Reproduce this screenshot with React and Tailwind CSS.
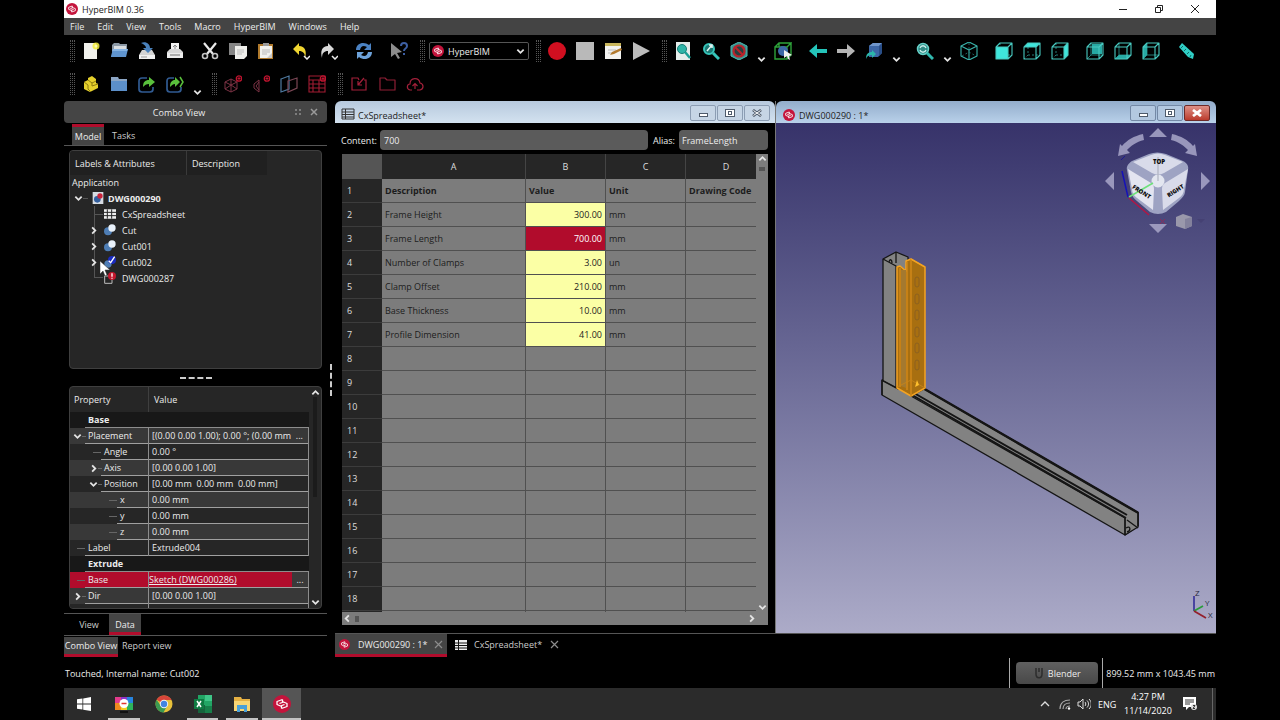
import React, { useState } from 'react';

const treeItems = [
  { label: 'CxSpreadsheet', icon: 'sheet' },
  { label: 'Cut', icon: 'cut', open: true },
  { label: 'Cut001', icon: 'cut', open: true },
  { label: 'Cut002', icon: 'cutCheck', open: true },
  { label: 'DWG000287', icon: 'link' },
];

const properties = [
  { group: 'Base' },
  { name: 'Placement', value: '[(0.00 0.00 1.00); 0.00 °; (0.00 mm  ...', level: 1, arrow: 'down', light: true },
  { name: 'Angle', value: '0.00 °', level: 2 },
  { name: 'Axis', value: '[0.00 0.00 1.00]', level: 2, arrow: 'right', light: true },
  { name: 'Position', value: '[0.00 mm  0.00 mm  0.00 mm]', level: 2, arrow: 'down' },
  { name: 'x', value: '0.00 mm', level: 3, light: true },
  { name: 'y', value: '0.00 mm', level: 3 },
  { name: 'z', value: '0.00 mm', level: 3, light: true },
  { name: 'Label', value: 'Extrude004', level: 1 },
  { group: 'Extrude' },
  { name: 'Base', value: 'Sketch (DWG000286)', level: 1, selected: true },
  { name: 'Dir', value: '[0.00 0.00 1.00]', level: 1, arrow: 'right', light: true },
  { name: '', value: '', level: 1 },
];

const sheetRows = [
  ['Description', 'Value', 'Unit', 'Drawing Code'],
  ['Frame Height', '300.00', 'mm', ''],
  ['Frame Length', '700.00', 'mm', ''],
  ['Number of Clamps', '3.00', 'un', ''],
  ['Clamp Offset', '210.00', 'mm', ''],
  ['Base Thickness', '10.00', 'mm', ''],
  ['Profile Dimension', '41.00', 'mm', ''],
];

function Svg({ children, size = 'size-[18px]' }) {
  return (
    <svg viewBox="0 0 18 18" className={`${size} shrink-0`} fill="none" aria-hidden="true">
      {children}
    </svg>
  );
}

function Logo({ size = 'size-3' }) {
  return (
    <Svg size={size}>
      <circle cx="9" cy="9" r="9" fill="#c4143c" />
      <path d="M9.500 4.500 4 6.500v3l3.500 1.500 4-1.500M8.500 13.500l5.500-2v-3L10.500 7 6.500 8.500M9.500 4.500v3M8.500 13.500v-3" stroke="#fff" strokeWidth="1.300" strokeLinejoin="round" />
    </Svg>
  );
}

function Chevron({ dir = 'down', className = '' }) {
  const paths = {
    down: 'M1.500 3 5 6.500 8.500 3',
    up: 'M1.500 7 5 3.500 8.500 7',
    right: 'M3.500 1.500 7 5 3.500 8.500',
    left: 'M6.500 1.500 3 5 6.500 8.500',
  };
  return (
    <svg viewBox="0 0 10 10" className={`size-[9px] shrink-0 ${className}`} fill="none" aria-hidden="true">
      <path d={paths[dir]} stroke="#e4e4e4" strokeWidth="2" />
    </svg>
  );
}

// Wireframe cube shared by all the standard view buttons
function Cube({ face }) {
  const faces = {
    front: 'M1 5h12v12H1z',
    top: 'M1 5l4-4h12l-4 4z',
    right: 'M13 5l4-4v12l-4 4z',
    rear: 'M6 2h10v10H6z',
    bottom: 'M1 17l4-4h12l-4 4z',
    left: 'M1 5l4-4v12l-4 4z',
  };
  const hidden = face === 'rear' || face === 'bottom' || face === 'left';
  return (
    <Svg>
      <path d="M5 1v12h12M5 13l-4 4" stroke="#2f9992" strokeWidth=".8" strokeDasharray={hidden ? '' : '2 2'} />
      <path d={faces[face]} fill={hidden ? '#27aaa4' : '#3fe6dc'} />
      <path d="M1 5h12v12H1zM1 5l4-4h12l-4 4M17 1v12l-4 4" stroke="#48c9c0" strokeWidth="1.100" strokeLinejoin="round" />
    </Svg>
  );
}

const icons = {
  new: <Svg><path d="M2 1h12l1 4v12H2z" fill="#f1f1ec" /><circle cx="14" cy="4" r="3.500" fill="#f4ee3a" opacity=".85" /><circle cx="14" cy="4" r="1.500" fill="#fffbb0" /></Svg>,
  open: <Svg><path d="M2 3l2-2h5l1 1h7v8H2z" fill="#8b98a5" /><path d="M4 4h12v5H4z" fill="#d9dde0" /><path d="M1 14 3 7h15l-2 8H1z" fill="#5f94cf" /><path d="M3 7h15l-1 2H2z" fill="#85b3e3" /></Svg>,
  save: <Svg><path d="M4 8h10l3 5v4H1v-4z" fill="#d3d3d3" /><path d="M1 13h16v4H1z" fill="#f0f0f0" /><path d="M3 1c5-2 9 1 9 5h3l-5 5-5-5h3c0-2-2-4-5-5z" fill="#4a82bd" /><path d="M3 15h6" stroke="#999" /></Svg>,
  print: <Svg><path d="M5 1h8v8H5z" fill="#f5f5f5" /><path d="M9 8V3M7 5l2-2 2 2" stroke="#888" /><path d="M1 10l3-3h10l3 3v5H1z" fill="#d8d8d8" /><path d="M1 11h16v5H1z" fill="#ececec" /><path d="M4 13h10" stroke="#999" strokeWidth="1.500" /></Svg>,
  cut: <Svg><path d="M3 1l9 11M15 1 6 12" stroke="#e9e9e9" strokeWidth="2.200" /><circle cx="4" cy="14" r="2.500" stroke="#c4c4c4" strokeWidth="1.600" /><circle cx="14" cy="14" r="2.500" stroke="#c4c4c4" strokeWidth="1.600" /></Svg>,
  copy: <Svg><path d="M0 1h12v12H0z" fill="#858585" /><path d="M6 4h12v10l-3 3H6z" fill="#efefec" /><path d="M8 8h7M8 10h7M8 12h5" stroke="#bdbdbd" /></Svg>,
  paste: <Svg><path d="M1 2h15v15H1z" fill="#b07a2c" /><path d="M3 4h12v12H3z" fill="#f2f2ee" /><path d="M6 1h6v3H6z" fill="#9a9a9a" /><path d="M5 8h8M5 10h8M5 12h5" stroke="#bbb" /><path d="M10 16l5-5v5z" fill="#c9c9c9" /></Svg>,
  undo: <Svg><path d="M1 7 7 1v3c6 0 8 5 6 12 0-5-2-7-6-7v4z" fill="#f0d531" /><Wee /></Svg>,
  redo: <Svg><path d="M14 7 8 1v3C2 4 0 9 2 16c0-5 2-7 6-7v4z" fill="#d9d9d9" /><Wee /></Svg>,
  refresh: <Svg><path d="M1 8C1 1 9-1 14 3l2-2v7H9l3-3C8 3 6 4 5 8z" fill="#4b82c2" /><path d="M17 10c0 7-8 9-13 5l-2 2v-7h7l-3 3c4 2 6 1 7-3z" fill="#6da2da" /></Svg>,
  whats: <Svg><path d="M1 1l11 9-5 1 3 5-2 1-3-5-4 3z" fill="#8d8d8d" /><path d="M11 4c0-4 6-4 6 0 0 3-3 2-3 5M14 11v2" stroke="#3d5fa3" strokeWidth="2" /></Svg>,
  record: <Svg><circle cx="9" cy="9" r="9" fill="#d10f20" /></Svg>,
  stop: <Svg><path d="M0 0h18v18H0z" fill="#b9b9b9" /></Svg>,
  macro: <Svg><path d="M1 1h16v16H1z" fill="#f3f3f0" /><path d="M1 1h16v3H1z" fill="#c9b65c" /><path d="M4 8h8M4 11h5" stroke="#bbb" /><path d="M17 6 8 10l-2 3 4-1 8-4z" fill="#b37a2d" /></Svg>,
  play: <Svg><path d="M1 0l17 9-17 9z" fill="#bcbcbc" /></Svg>,
  fitAll: <Svg><path d="M2 0h14v18H2z" fill="#e4ecea" /><circle cx="8" cy="7" r="4.500" fill="#2fb5a8" stroke="#157d76" /><path d="M11 10l5 6" stroke="#1a9f95" strokeWidth="2.500" /></Svg>,
  fitSel: <Svg><circle cx="7" cy="7" r="5" fill="#1a7772" stroke="#36c4b9" strokeWidth="2" /><path d="M11 11l6 6" stroke="#36c4b9" strokeWidth="3" /><path d="M5 9l5-6M7 3h3v3" stroke="#e2f4f2" strokeWidth="1.500" /></Svg>,
  drawStyle: <Svg><path d="M9 0l8 4v10l-8 4-8-4V4z" fill="#3b8f8b" stroke="#4fb9b3" /><circle cx="9" cy="9" r="5.500" fill="#26403f" stroke="#b9232b" strokeWidth="2.200" /><path d="M5 5l8 8" stroke="#b9232b" strokeWidth="2.200" /></Svg>,
  bbox: <Svg><path d="M1 5h12v12H1zM1 5l4-4h12l-4 4M17 1v12l-4 4M5 1v4" stroke="#2ea23a" strokeWidth="1.400" /><circle cx="9" cy="9" r="5" fill="#3c67a6" /><path d="M10 8l8 5-3 1 1 4-2-1-1-3-3 2z" fill="#f2f2f2" /></Svg>,
  back: <Svg><path d="M0 9l8-7v5h10v4H8v5z" fill="#25c4ba" /></Svg>,
  forward: <Svg><path d="M18 9l-8-7v5H0v4h10v5z" fill="#b5b5b5" /></Svg>,
  linkGo: <Svg><path d="M4 4l4-3h9v10l-4 4H4z" fill="#3c66a6" /><path d="M4 4l4-3h9l-3 3z" fill="#7096cb" /><path d="M14 4l3-3v10l-3 3z" fill="#294e88" /><path d="M1 17c0-5 2-7 6-7V8l4 4-4 4v-3c-3 0-5 1-6 4z" fill="#2cb6ab" /></Svg>,
  zoom: <Svg><circle cx="7" cy="7" r="5.500" fill="#2f8a84" stroke="#66cfc7" strokeWidth="1.500" /><path d="M11 11l6 6" stroke="#31b8ae" strokeWidth="3" /><path d="M4 6c1-3 5-3 6 0M10 8c-1 3-5 3-6 0" stroke="#c9efec" strokeWidth="1.300" /></Svg>,
  iso: <Svg><path d="M9 0l8 4v10l-8 4-8-4V4zM1 4l8 4 8-4M9 8v10" stroke="#3bb5ad" strokeWidth="1.100" strokeLinejoin="round" /><path d="M9 1v8M2 14l7-4 7 4" stroke="#2a827c" strokeWidth=".8" strokeDasharray="2 2" /></Svg>,
  front: <Cube face="front" />,
  top: <Cube face="top" />,
  right: <Cube face="right" />,
  rear: <Cube face="rear" />,
  bottom: <Cube face="bottom" />,
  left: <Cube face="left" />,
  measure: <Svg><path d="M5 1l12 11-1 5-5-2L2 5z" fill="#30cfc6" /><path d="M4 6l2-2M7 9l2-2M10 12l2-2M13 15l1-2" stroke="#116a66" /></Svg>,
  part: <Svg><path d="M2 7l4-2V3l4-2 4 3v4l2 1v4l-8 4-6-3z" fill="#e4cf2c" /><path d="M2 7l4 3v4l3 3M6 5l4 3 4-2M10 8v3l6-2" stroke="#8c7a10" /></Svg>,
  folder: <Svg><path d="M1 2h7l1 2h8v12H1z" fill="#8ba5c4" /><path d="M1 6h16v10H1z" fill="#5c8fc9" /></Svg>,
  export: <Svg><path d="M9 3H4c-2 0-3 1-3 3v8c0 2 1 3 3 3h8c2 0 3-1 3-3v-2" stroke="#315b92" strokeWidth="1.700" /><path d="M5 12c0-5 2-7 6-7V2l6 5-6 5V9c-3 0-4 1-6 3z" fill="#5ac03c" /></Svg>,
  exportAll: <Svg><path d="M8 3H4C2 3 1 4 1 6v8c0 2 1 3 3 3h8c2 0 3-1 3-3v-2" stroke="#315b92" strokeWidth="1.700" /><path d="M4 12c0-5 2-7 5-7V2l5 5-5 5V9c-2 0-3 1-5 3z" fill="#5ac03c" /><path d="M14 2l3 5-3 5" stroke="#5ac03c" strokeWidth="1.500" /></Svg>,
  hex: <Svg><path d="M7 4l6 3v7l-6 3-6-3V7zM1 7l6 3 6-3M7 4v13M1 14l6-4 6 4" stroke="#7d3345" /><Plus /></Svg>,
  panel: <Svg><path d="M2 9l5-4v12l-5-4zM7 7l-3 4 3 4" stroke="#7d3345" /><Plus /></Svg>,
  planes: <Svg><path d="M1 4l8-3v13l-8 3z" stroke="#4f7aa0" strokeWidth="1.200" /><path d="M8 6l9-3v10l-9 4z" stroke="#7a4654" strokeWidth="1.200" /></Svg>,
  grid: <Svg><path d="M1 1h16v16H1zM1 5h16M1 9h16M1 13h16M5 5v12M11 5v12" stroke="#a31c33" strokeWidth="1.100" /><Plus /></Svg>,
  folderIn: <Svg><path d="M9 5 8 3H2v12h14V5h-2M14 3l-6 7M8 6v4h4" stroke="#a3203a" strokeWidth="1.200" /></Svg>,
  folderRed: <Svg><path d="M2 3h5l2 2h8v10H2z" stroke="#8f1f35" strokeWidth="1.200" strokeLinejoin="round" /></Svg>,
  cloud: <Svg><path d="M6 15H4c-4-1-3-6 0-6 0-7 9-7 10-1 4 1 4 6 0 7h-3M9 14V9M6.500 11 9 8.500 11.500 11" stroke="#a3203a" strokeWidth="1.200" /></Svg>,
  sheet: <Svg size="size-3"><path d="M0 2h18v14H0z" fill="#f0f0f0" /><path d="M0 6.500h18M0 11.500h18M5 2v14M11.500 2v14" stroke="#262626" strokeWidth="1.500" /></Svg>,
  cutItem: <Svg size="size-3"><circle cx="6" cy="11" r="6" fill="#4e7db4" /><circle cx="12" cy="6" r="5.500" fill="#e9f1fa" /></Svg>,
  cutCheck: <Svg size="size-3"><circle cx="6" cy="12" r="5.500" fill="#4e7db4" /><circle cx="12" cy="6" r="6" fill="#1a2bc0" /><path d="M7 7l3 3 6-9" stroke="#fff" strokeWidth="2" /></Svg>,
  link: <Svg size="size-3"><path d="M1 6h11v11H1z" stroke="#bbb" strokeWidth="1.500" /><circle cx="12" cy="6" r="6" fill="#c3162c" /><path d="M12 2v5M12 8.500V10" stroke="#fff" strokeWidth="2" /></Svg>,
  doc: <Svg size="size-3"><path d="M1 0h16v18H1z" fill="#d6dbe2" /><circle cx="8" cy="11" r="5" fill="#335f9e" /><circle cx="12" cy="6" r="4" fill="#c8233a" /></Svg>,
};

function Wee() {
  return <path d="M12 14l3 3 3-3" stroke="#eee" strokeWidth="1.500" />;
}

function Plus() {
  return (
    <>
      <circle cx="15" cy="3.500" r="2.700" stroke="#c0142f" strokeWidth="1.300" />
      <path d="M13.500 3.500h3M15 2v3" stroke="#c0142f" />
    </>
  );
}

function Tool({ name }) {
  return (
    <button aria-label={name} className="flex h-7 w-7 shrink-0 items-center justify-center">
      {icons[name]}
    </button>
  );
}

function Tools({ names }) {
  return names.map((n) => <Tool key={n} name={n} />);
}

function Sep() {
  return <span className="w-[7px] shrink-0" />;
}

function More() {
  return (
    <button aria-label="More" className="flex h-7 w-4 shrink-0 items-end justify-center pb-px">
      <Chevron />
    </button>
  );
}

function Handle({ className = 'ml-[5px]' }) {
  return (
    <span className={`flex h-[22px] w-[9px] shrink-0 gap-px pl-[2px] ${className}`}>
      <span className="border-l border-dotted border-[#555]" />
      <span className="border-l border-dotted border-[#555]" />
      <span className="border-l border-dotted border-[#555]" />
    </span>
  );
}

function WinButtons({ active }) {
  const base = 'flex h-4 w-[26px] items-center justify-center rounded-xs border';
  const plain = active ? 'border-[#7489a6] bg-[#b3c8e0]' : 'border-[#8c9db3] bg-[#c6d5e5]';
  return (
    <div className="ml-auto flex gap-px pt-px">
      <button aria-label="Minimize" className={`${base} ${plain}`}>
        <span className="mt-1 h-[4px] w-[9px] border border-[#4f5b6b] bg-white" />
      </button>
      <button aria-label="Maximize" className={`${base} ${plain}`}>
        <span className="flex h-[8px] w-[10px] items-center justify-center border border-[#4f5b6b] bg-white">
          <span className="h-[4px] w-[4px] border border-[#4f5b6b]" />
        </span>
      </button>
      <button aria-label="Close" className={`${base} ${active ? 'border-[#6d2a28] bg-linear-to-b from-[#dd8f86] to-[#bb3a2c]' : plain}`}>
        <svg viewBox="0 0 10 8" className="h-2 w-2.5" aria-hidden="true">
          <path d="M1 1l8 6M9 1 1 7" stroke={active ? '#fff' : '#4f5b6b'} strokeWidth="2.800" />
          {!active && <path d="M1.500 1.500l7 5M8.500 1.500l-7 5" stroke="#fff" strokeWidth="1" />}
        </svg>
      </button>
    </div>
  );
}

function TreeView() {
  return (
    <div className="relative mx-[5px] flex-1 overflow-hidden rounded-sm border border-[#3f3f3f] bg-[#262626]">
      <div className="flex h-6 items-center">
        <span className="flex h-full w-[117px] items-center border-r border-[#3a3a3a] bg-[#202020] pl-[5px]">Labels &amp; Attributes</span>
        <span className="flex h-full w-20 items-center bg-[#202020] pl-[5px]">Description</span>
      </div>
      <div className="h-[15px] pl-[2px]">Application</div>
      <div className="flex h-4 items-center">
        <Chevron className="ml-1" />
        <span className="mr-1 w-[5px] border-t border-[#555]" />
        {icons.doc}
        <span className="ml-1 font-bold">DWG000290</span>
      </div>
      <ul className="ml-6">
        {treeItems.map((item, i) => (
          <li key={item.label} className="flex h-4 items-center">
            <span className={`w-[9px] border-l border-[#555] ${i === treeItems.length - 1 ? 'h-2 self-start border-b' : 'flex h-4 items-center'}`}>
              {item.open ? <Chevron dir="right" className="-ml-1.5" /> : i === 0 && <span className="w-2 border-t border-[#555]" />}
            </span>
            <span className="ml-px flex w-3.5">{item.icon === 'cut' ? icons.cutItem : icons[item.icon]}</span>
            <span className="ml-1">{item.label}</span>
          </li>
        ))}
      </ul>
      <svg viewBox="0 0 10 16" className="absolute top-[110px] left-[30px] h-4 w-2.5" aria-hidden="true">
        <path d="M0 0v13l3-3 2 5 2-1-2-5h5z" fill="#fff" stroke="#333" strokeWidth=".5" />
      </svg>
    </div>
  );
}

const nameIndent = { 1: 'ml-[15px]', 2: 'ml-[31px]', 3: 'ml-[47px]' };
const arrowIndent = { 1: 'left-[3px]', 2: 'left-[19px]', 3: 'left-[35px]' };

function PropertyView() {
  return (
    <div className="mx-[5px] flex h-[223px] shrink-0 overflow-hidden rounded-sm border border-[#3f3f3f] bg-[#262626]">
      <div className="min-w-0 flex-1">
        <table className="w-full table-fixed border-separate border-spacing-0 text-left">
          <thead>
            <tr className="h-[25px]">
              <th className="w-[79px] border-r border-[#3f3f3f] p-0 pl-1 font-normal">Property</th>
              <th className="p-0 pl-[5px] font-normal">Value</th>
            </tr>
          </thead>
          <tbody>
            {properties.map((p, i) =>
              p.group ? (
                <tr key={i} className="h-4 bg-[#181818]">
                  <td colSpan={2} className="p-0 font-bold">
                    <div className="ml-[15px] h-4 border-b border-[#8d8d8d] pl-[3px] leading-4">{p.group}</div>
                  </td>
                </tr>
              ) : (
                <tr key={i} className={`h-4 ${p.selected ? 'bg-[#b10c2c]' : p.light ? 'bg-[#383838]' : 'bg-[#262626]'}`}>
                  <td className="relative border-r border-[#8d8d8d] p-0">
                    <div className={`h-4 border-b border-[#a0a0a0] pl-[3px] leading-4 ${nameIndent[p.level]}`}>{p.name}</div>
                    <span className={`absolute top-0 flex h-4 items-center ${arrowIndent[p.level]}`}>
                      {p.arrow ? (
                        <>
                          <Chevron dir={p.arrow} />
                          <span className="w-1 border-t border-[#666]" />
                        </>
                      ) : (
                        <span className="ml-1 w-2 border-t border-[#666]" />
                      )}
                    </span>
                  </td>
                  <td className="border-r border-[#8d8d8d] p-0">
                    <div className={`flex h-4 border-b border-[#a0a0a0] leading-4 whitespace-pre ${p.selected ? '' : 'pl-[3px]'}`}>
                      {p.selected ? (
                        <>
                          <a href="#sketch" className="underline">{p.value}</a>
                          <button aria-label="Edit link" className="ml-auto w-4 bg-[#3a3a3a] leading-3">...</button>
                        </>
                      ) : (
                        p.value
                      )}
                    </div>
                  </td>
                </tr>
              )
            )}
          </tbody>
        </table>
      </div>
      <div className="flex w-3 shrink-0 flex-col items-center py-px">
        <Chevron dir="up" />
        <span className="h-[100px] w-1 bg-[#1b1b1b]" />
        <Chevron className="mt-auto" />
      </div>
    </div>
  );
}

function ComboView() {
  return (
    <section className="flex w-[263px] shrink-0 flex-col">
      <div className="flex h-[22px] shrink-0 items-center rounded bg-[#454545] pr-[9px]">
        <h2 className="flex-1 text-center">Combo View</h2>
        <div className="flex items-center gap-2">
          <svg viewBox="0 0 8 8" className="size-2" aria-hidden="true">
            <path d="M1 1h2v2H1zM5 1h2v2H5zM1 5h2v2H1zM5 5h2v2H5z" fill="#7c7c7c" />
          </svg>
          <svg viewBox="0 0 8 8" className="size-2" aria-hidden="true">
            <path d="M1 1l6 6M7 1 1 7" stroke="#9a9a9a" strokeWidth="1.500" />
          </svg>
        </div>
      </div>
      <div className="mt-px mb-1 flex h-[22px] shrink-0 border-b border-[#555] pl-2">
        <button className="w-8 border-t-3 border-[#b10c2c] bg-[#444]">Model</button>
        <button className="px-2 pt-[2px] text-[#ccc]">Tasks</button>
      </div>
      <TreeView />
      <div className="flex h-[17px] shrink-0 items-center justify-center">
        <span className="w-8 border-t-2 border-dashed border-[#ccc]" />
      </div>
      <PropertyView />
      <div className="mt-1 flex h-[23px] shrink-0 border-y border-[#555] pl-2">
        <button className="w-[34px] text-[#ccc]">View</button>
        <button className="ml-[3px] w-8 border-b-3 border-[#b10c2c] bg-[#444] pt-[2px]">Data</button>
      </div>
      <div className="mt-px mb-px flex h-5 shrink-0">
        <button className="w-[54px] border-b-3 border-[#b10c2c] bg-[#444] whitespace-nowrap">Combo View</button>
        <button className="px-1 pb-[3px] text-[#ccc]">Report view</button>
      </div>
    </section>
  );
}

function Spreadsheet() {
  const [content, setContent] = useState('700');
  const [alias, setAlias] = useState('FrameLength');
  const rows = Array.from({ length: 19 }, (_, i) => sheetRows[i] || ['', '', '', '']);

  return (
    <section className="flex w-[441px] shrink-0 flex-col border-r border-[#777]">
      <header className="flex h-[22px] shrink-0 items-center rounded-t-md bg-linear-to-b from-[#b7c9dd] to-[#d3e2f0] pr-[5px] pl-1.5 text-[#222]">
        <svg viewBox="0 0 14 12" className="mt-1 h-3 w-3.5" aria-hidden="true">
          <path d="M1 1h12v10H1zM1 4h12M1 6.500h12M1 9h12M4.500 1v10" stroke="#333" fill="none" />
        </svg>
        <span className="mt-[6px] ml-[3px]">CxSpreadsheet*</span>
        <WinButtons />
      </header>
      <div className="flex min-h-0 flex-1 flex-col bg-black pt-[7px] pr-[7px] pb-2 pl-1.5">
        <div className="mb-1 flex h-5 shrink-0 items-center">
          <label htmlFor="content" className="w-[39px]">Content:</label>
          <input id="content" value={content} onChange={(e) => setContent(e.target.value)} className="h-5 min-w-0 flex-1 rounded-sm bg-[#5b5b5b] px-[4px]" />
          <label htmlFor="alias" className="ml-[5px] w-[26px]">Alias:</label>
          <input id="alias" value={alias} onChange={(e) => setAlias(e.target.value)} className="h-5 w-[89px] rounded-sm bg-[#5b5b5b] px-[3px]" />
        </div>
        <div className="ml-px flex min-h-0 flex-1 bg-[#7c7c7c]">
          <div className="min-w-0 flex-1 overflow-hidden">
            <table className="w-[424px] table-fixed border-separate border-spacing-0 text-[#1c1c1c]">
              <thead>
                <tr className="h-[25px] bg-[#262626] text-[#ddd]">
                  <th className="w-10 bg-[#555] p-0" />
                  <th className="w-36 border-r border-[#444] p-0 font-normal">A</th>
                  <th className="w-20 border-r border-[#444] p-0 font-normal">B</th>
                  <th className="w-20 border-r border-[#444] p-0 font-normal">C</th>
                  <th className="w-20 p-0 font-normal">D</th>
                </tr>
              </thead>
              <tbody>
                {rows.map((row, i) => (
                  <tr key={i} className={i === 0 ? 'h-6 font-bold' : 'h-6'}>
                    <th className="border-b border-[#3c3c3c] bg-[#262626] p-0 pl-[5px] text-left font-normal text-[#ddd]">{i < 18 ? i + 1 : ''}</th>
                    {row.map((cell, j) => {
                      let cls = 'border-r border-b border-[#505050] p-0 px-[3px] whitespace-nowrap';
                      if (j === 1 && i > 0 && cell) {
                        cls += i === 2 ? ' bg-[#b10c2c] text-right text-white' : ' bg-[#fbffa5] text-right';
                      }
                      return <td key={j} className={cls}>{cell}</td>;
                    })}
                  </tr>
                ))}
              </tbody>
            </table>
          </div>
          <div className="flex w-3 shrink-0 flex-col items-center">
            <Chevron dir="up" />
            <span className="mt-1 h-1 w-1.5 bg-[#555]" />
            <Chevron className="mt-auto" />
          </div>
        </div>
        <div className="ml-px flex h-[13px] shrink-0 items-center bg-[#7c7c7c] pr-3 pl-px">
          <Chevron dir="left" />
          <span className="ml-[3px] h-1.5 w-1 bg-[#555]" />
          <Chevron dir="right" className="ml-auto" />
        </div>
      </div>
    </section>
  );
}

const slots = [282, 299, 315, 332, 348, 365];

function Viewport() {
  return (
    <section className="flex min-w-0 flex-1 flex-col">
      <header className="flex h-[22px] shrink-0 items-center rounded-t-md bg-linear-to-b from-[#93adcb] to-[#b9d1ea] pr-1.5 pl-[7px] text-[#222]">
        <span className="mt-[5px] flex"><Logo /></span>
        <span className="mt-[6px] ml-1">DWG000290 : 1*</span>
        <WinButtons active />
      </header>
      <div className="relative min-h-0 flex-1 bg-linear-to-b from-[#37336a] to-[#acabc8]">
        <svg viewBox="776 123 440 510" className="absolute inset-0 h-full w-full" fill="none" aria-label="3D model">
          {/* horizontal rail */}
          <g stroke="#151515" strokeWidth="1.300" strokeLinejoin="round">
            <path d="M882 380 924 388 1138 512v14l-13 9L882 395z" fill="#828282" />
            <path d="M924 389l214 124v14l-13 8v-17L911 396z" fill="#848484" />
            <path d="M912 395l214 123M914 393l213 122" strokeWidth="2" />
            <path d="M924 389l214 124" strokeWidth="2" />
            <path d="M1125 535v-17M1138 512v14M1127 520l11 8M1126 528c5-3 5 3 1 4" />
          </g>
          {/* rear upright */}
          <g stroke="#151515" strokeWidth="1.300" strokeLinejoin="round">
            <path d="M883 259l13-7 12 5v130l-10 2-15-8z" fill="#828282" />
            <path d="M883 259l13 7v121M896 252v11" />
            <path d="M889 262c1-4 3-2 3 1" />
            <path d="M882 380v15M882 380l15 8" />
          </g>
          {/* selected upright */}
          <g stroke="#f3a322" strokeWidth="1.500" strokeLinejoin="round">
            <path d="M897 267l3-1 6 5v-10l5-2 14 8v121l-14 8-14-8z" fill="#a86f10" />
            <path d="M901 270h5v118l-5-2z" fill="#a4792f" stroke="none" />
            <path d="M900 268v119M907 262v128M911 259v137" stroke="#d08818" />
            <path d="M911 259l14 8" strokeWidth=".8" />
            <path d="M897 387l14-7 14 8" strokeWidth=".8" stroke="#c98518" />
            {slots.map((y) => (
              <rect key={y} x="915" y={y - 5} width="4" height="10" rx="2" stroke="#8d6120" strokeWidth="1" />
            ))}
            <path d="M915 387l2-7 2 5z" fill="#ffc02e" stroke="none" />
          </g>
          {/* navigation cube */}
          <g fill="#a9a7c9" opacity=".85">
            <path d="M1158 128l9 9h-18zM1158 233l9-9h-18zM1105 181l9-9v18zM1210 181l-9-9v18z" />
            <path d="M1143 134l1 6c-8 2-13 6-17 10l3 3-12 3 2-12 2 2c5-6 12-10 21-12zM1172 134l-1 6c8 2 13 6 17 10l-3 3 12 3-2-12-2 2c-5-6-12-10-21-12z" />
          </g>
          <path d="M1127 170c-1-4 2-7 5-9l17-7q8-3 17 0l17 7c4 2 6 5 5 9l-3 22c0 3-3 6-6 9l-13 11q-8 4-16 0l-13-11c-3-2-5-5-6-9z" fill="#9ea3c3" />
          <path d="M1133 162l18-7q7-3 14 0l18 7-19 11q-6 3-12 0z" fill="#d9dbea" />
          <path d="M1128 169l23 14c2 1 3 3 3 6l-1 21-16-12c-3-2-5-5-5-9z" fill="#e3e4f0" />
          <path d="M1188 169l-23 14c-2 1-3 3-3 6l1 21 16-12c3-2 5-5 5-9z" fill="#d9dbea" />
          <circle cx="1158" cy="181" r="6.500" fill="#e3e6f0" />
          <path d="M1158 181v-24" stroke="#a5a9b8" />
          <path d="M1128 197l-6-26" stroke="#1512b8" strokeWidth="1.500" />
          <path d="M1129 197l24-14" stroke="#6fe07a" strokeWidth="1.500" />
          <path d="M1129 198l20 17" stroke="#b31644" strokeWidth="1.500" />
          <g fill="#0c0c0c" fontSize="6" fontWeight="800" textAnchor="middle">
            <text x="1159" y="164">TOP</text>
            <text transform="rotate(32 1142 191)" x="1142" y="194">FRONT</text>
            <text transform="rotate(-32 1175 190)" x="1175" y="193">RIGHT</text>
          </g>
          <path d="M1121 160l4-4" stroke="#1c1990" />
          <path d="M1160 219l5 5M1165 219l-5 5" stroke="#8a2c5a" />
          <path d="M1176 217l7-3 9 3v9l-7 3-9-3z" fill="#9a98ab" />
          <path d="M1185 219l7-2v9l-7 3z" fill="#83819c" />
          <path d="M1197 219l4 4 4-4z" fill="#454173" />
          {/* axis cross */}
          <path d="M1194 611v-15" stroke="#2b2596" strokeWidth="1.500" />
          <path d="M1194 611l9-5" stroke="#2a9c3c" strokeWidth="1.800" />
          <path d="M1194 611l12 7" stroke="#93202c" strokeWidth="1.800" />
          <g fill="#26263c" fontSize="8">
            <text x="1195" y="596">Z</text>
            <text x="1205" y="606">Y</text>
            <text x="1208" y="618">X</text>
          </g>
        </svg>
      </div>
    </section>
  );
}

function DocumentTabs() {
  return (
    <nav className="mb-px flex h-6 shrink-0 items-stretch border-t border-[#555]">
      <div className="flex w-28 items-center border-b-3 border-[#b10c2c] bg-[#444] pt-px pl-1">
        <Logo size="size-[11px]" />
        <button className="ml-2 whitespace-nowrap">DWG000290 : 1*</button>
        <button aria-label="Close DWG000290" className="mr-1 ml-auto"><CloseX /></button>
      </div>
      <div className="flex w-28 items-center pt-px pb-[3px] pl-2 text-[#ccc]">
        <svg viewBox="0 0 12 10" className="h-2.5 w-3 shrink-0" aria-hidden="true">
          <path d="M0 0h12v10H0z" fill="#eee" />
          <path d="M0 3h12M0 5.500h12M0 8h12M3.500 0v10" stroke="#111" />
        </svg>
        <button className="ml-[7px]">CxSpreadsheet*</button>
        <button aria-label="Close CxSpreadsheet" className="ml-auto"><CloseX /></button>
      </div>
    </nav>
  );
}

function CloseX() {
  return (
    <svg viewBox="0 0 9 9" className="size-[9px]" aria-hidden="true">
      <path d="M1 1l7 7M8 1 1 8" stroke="#8c8c8c" strokeWidth="1.200" />
    </svg>
  );
}

function TaskButton({ label, running, active, wide, children }) {
  return (
    <button aria-label={label} className={`relative flex items-center justify-center ${wide ? 'w-10' : 'w-[39px]'} ${active ? 'bg-[#555]' : ''}`}>
      {children}
      {running && <span className={`absolute bottom-0 h-0.5 bg-[#c4c4c4] ${active ? 'inset-x-0' : 'inset-x-1'}`} />}
    </button>
  );
}

function Taskbar() {
  return (
    <footer className="flex h-8 shrink-0 bg-[#2b2b2b] text-white">
      <TaskButton label="Start" wide>
        <Svg size="size-3.5"><path d="M0 3l7-1v6.500H0zM8 2l10-2v8.500H8zM0 9.500h7V16l-7-1zM8 9.500h10V18L8 16.500z" fill="#fff" /></Svg>
      </TaskButton>
      <TaskButton label="Screen recorder" running wide>
        <Svg>
          <path d="M0 2h6v6H0z" fill="#e33b8c" />
          <path d="M6 2h6v6H6z" fill="#8d35c9" />
          <path d="M12 2h6v6h-6z" fill="#2785e0" />
          <path d="M0 8h6v7H0z" fill="#f08a1e" />
          <path d="M6 8h6v7H6z" fill="#f1cf22" />
          <path d="M12 8h6v7h-6z" fill="#2db35c" />
          <circle cx="9" cy="8.500" r="4.500" fill="#fff" />
          <path d="M6.500 8.500h5" stroke="#e2372f" strokeWidth="1.500" />
          <path d="M5 17h8" stroke="#111" strokeWidth="2" />
        </Svg>
      </TaskButton>
      <TaskButton label="Chrome">
        <Svg>
          <circle cx="9" cy="9" r="8.500" fill="#e8c13a" />
          <path d="M9 9 1.600 4.800A8.500 8.500 0 0 1 16.600 5H9z" fill="#d8453a" />
          <path d="M1.600 4.800A8.500 8.500 0 0 0 8.500 17.500L12 11 6 11z" fill="#3b9a52" />
          <circle cx="9" cy="9" r="4.200" fill="#f2f2f2" />
          <circle cx="9" cy="9" r="3.200" fill="#4384e0" />
        </Svg>
      </TaskButton>
      <TaskButton label="Excel" running>
        <Svg>
          <path d="M4 0h14v18H4z" fill="#22a565" />
          <path d="M11 0h7v6h-7z" fill="#3fc688" />
          <path d="M4 10h7v8H4z" fill="#15643c" />
          <path d="M11 11h7v7h-7z" fill="#17804a" />
          <path d="M0 4h10v10H0z" fill="#0f7a42" />
          <path d="M3 6l4 6M7 6l-4 6" stroke="#fff" strokeWidth="1.500" />
        </Svg>
      </TaskButton>
      <TaskButton label="File Explorer" running wide>
        <Svg>
          <path d="M1 2h7l1 2h8v12H1z" fill="#e6b143" />
          <path d="M1 6h16v10H1z" fill="#f8d675" />
          <path d="M4 10h10v7h-3v-3H7v3H4z" fill="#4aa0d8" />
        </Svg>
      </TaskButton>
      <TaskButton label="HyperBIM" running active>
        <Logo size="size-[18px]" />
      </TaskButton>
      <div className="ml-auto flex items-center">
        <svg viewBox="0 0 10 10" className="size-[10px]" fill="none" aria-hidden="true"><path d="M1 7l4-4 4 4" stroke="#ddd" strokeWidth="1.300" /></svg>
        <svg viewBox="0 0 12 12" className="ml-[9px] size-3" fill="none" aria-hidden="true">
          <path d="M1 11C1 5 5 2 11 2M4 11c0-4 3-6 7-6M7 11c0-2 2-3 4-3" stroke="#aaa" strokeWidth="1.200" />
          <circle cx="10" cy="10.500" r="1.200" fill="#fff" />
        </svg>
        <svg viewBox="0 0 14 12" className="ml-[6px] h-3 w-3.5" fill="none" aria-hidden="true">
          <path d="M1 4h2l3-3v10L3 8H1zM8 4c1 1 1 3 0 4M10 2.500c2 2 2 5 0 7M12 1c3 3 3 7 0 10" stroke="#ddd" />
        </svg>
        <span className="ml-[7px] w-[20px]">ENG</span>
        <div className="ml-1 w-[52px] text-center leading-[14px]">
          <div>4:27 PM</div>
          <div>11/14/2020</div>
        </div>
        <svg viewBox="0 0 14 14" className="ml-[9px] size-3.5" aria-hidden="true">
          <path d="M0 0h13v10H6l-3 3v-3H0z" fill="#fff" />
          <path d="M2 3h9M2 5h9M2 7h5" stroke="#333" />
          <circle cx="11" cy="10" r="3" fill="#ddd" />
          <path d="M10 8.500h2l-2 3h2" stroke="#333" fill="none" />
        </svg>
        <span className="ml-[15px] h-8 w-[4px] border-l border-[#666]" />
      </div>
    </footer>
  );
}

export default function App() {
  const menus = ['File', 'Edit', 'View', 'Tools', 'Macro', 'HyperBIM', 'Windows', 'Help'];

  return (
    <div className="h-screen bg-black px-16 font-['Open_Sans','Noto_Sans',sans-serif] text-[9px] leading-[15px] text-[#ececec]">
      <div className="flex h-full flex-col overflow-hidden">
        <header className="flex h-[18px] shrink-0 items-center bg-white pl-[2px] text-[#222]">
          <Logo />
          <h1 className="ml-1">HyperBIM 0.36</h1>
          <div className="ml-auto flex items-center gap-[26px] pr-4">
            <button aria-label="Minimize"><svg viewBox="0 0 10 10" className="size-[10px]"><path d="M1 5.500h8" stroke="#222" /></svg></button>
            <button aria-label="Restore"><svg viewBox="0 0 10 10" className="size-[10px]" fill="none"><path d="M1.500 3.500h5v5h-5zM3.500 3.500v-2h5v5h-2" stroke="#222" /></svg></button>
            <button aria-label="Close"><svg viewBox="0 0 10 10" className="size-[10px]"><path d="M1 1l8 8M9 1 1 9" stroke="#222" /></svg></button>
          </div>
        </header>
        <nav className="flex h-[17px] shrink-0 items-center gap-[13px] bg-[#444] pl-1.5">
          {menus.map((m) => (
            <button key={m}>{m}</button>
          ))}
        </nav>

        <div className="flex h-8 shrink-0 items-center pl-1">
          <Handle className="" />
          <Tools names={['new', 'open', 'save', 'print']} />
          <Sep />
          <Tools names={['cut', 'copy', 'paste']} />
          <Sep />
          <Tools names={['undo', 'redo']} />
          <Sep />
          <Tool name="refresh" />
          <Sep />
          <Tool name="whats" />
          <Handle />
          <div className="ml-[2px] flex h-[18px] w-[100px] shrink-0 items-center rounded-xs border border-[#555] px-[2px]">
            <Logo />
            <select aria-label="Workbench" className="min-w-0 flex-1 appearance-none bg-black pl-1">
              <option>HyperBIM</option>
            </select>
            <Chevron className="mr-px" />
          </div>
          <Handle />
          <Tools names={['record', 'stop', 'macro', 'play']} />
          <Handle />
          <Tools names={['fitAll', 'fitSel', 'drawStyle']} />
          <More />
          <Tool name="bbox" />
          <Sep />
          <Tools names={['back', 'forward', 'linkGo']} />
          <More />
          <Sep />
          <Tool name="zoom" />
          <More />
          <Tool name="iso" />
          <Sep />
          <Tools names={['front', 'top', 'right']} />
          <Sep />
          <Tools names={['rear', 'bottom', 'left']} />
          <Sep />
          <Tool name="measure" />
        </div>
        <div className="flex h-[34px] shrink-0 items-center pl-1">
          <Handle className="" />
          <Tools names={['part', 'folder', 'export', 'exportAll']} />
          <More />
          <Handle />
          <Tools names={['hex', 'panel', 'planes', 'grid']} />
          <Handle />
          <Tools names={['folderIn', 'folderRed', 'cloud']} />
        </div>

        <main className="flex min-h-0 flex-1">
          <ComboView />
          <div className="flex w-2 shrink-0 items-center justify-center">
            <span className="h-8 border-l-2 border-dashed border-[#ccc]" />
          </div>
          <div className="flex min-w-0 flex-1 flex-col">
            <div className="flex min-h-0 flex-1">
              <Spreadsheet />
              <Viewport />
            </div>
            <DocumentTabs />
          </div>
        </main>

        <div className="flex h-[30px] shrink-0 items-center">
          <span className="pl-px">Touched, Internal name: Cut002</span>
          <div className="ml-auto flex h-full items-center border-l border-[#aaa] pl-1.5">
            <button className="mr-[4px] flex h-[22px] w-[82px] items-center justify-center gap-1 rounded bg-linear-to-b from-[#606060] to-[#484848]">
              <svg viewBox="0 0 10 12" className="h-3 w-2.5" fill="none" aria-hidden="true">
                <path d="M2 1v6c0 5 6 5 6 0V1M5 1v4" stroke="#2d2d2d" strokeWidth="1.500" />
              </svg>
              Blender
            </button>
            <span className="flex h-full items-center border-l border-[#aaa] pr-px pl-[3px] whitespace-nowrap">899.52 mm x 1043.45 mm</span>
          </div>
        </div>
        <Taskbar />
      </div>
    </div>
  );
}
